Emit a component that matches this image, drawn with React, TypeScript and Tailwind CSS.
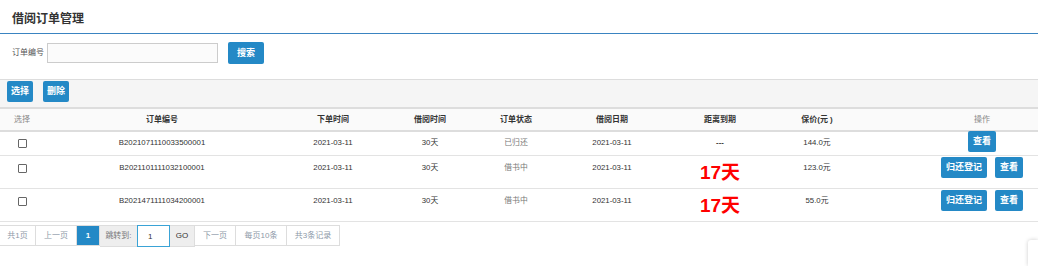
import React from 'react';

type Order = {
  no: string;
  created: string;
  days: string;
  status: string;
  date: string;
  left: string | null;
  price: string;
  canReturn: boolean;
};

const orders: Order[] = [
  { no: 'B2021071110033500001', created: '2021-03-11', days: '30天', status: '已归还', date: '2021-03-11', left: null, price: '144.0元', canReturn: false },
  { no: 'B2021101111032100001', created: '2021-03-11', days: '30天', status: '借书中', date: '2021-03-11', left: '17天', price: '123.0元', canReturn: true },
  { no: 'B2021471111034200001', created: '2021-03-11', days: '30天', status: '借书中', date: '2021-03-11', left: '17天', price: '55.0元', canReturn: true },
];

const cols = 'grid grid-cols-[44px_236px_106px_88px_84px_108px_108px_86px_1fr]';

const Btn: React.FC<{ label: string; className?: string }> = ({ label, className = '' }) => (
  <button
    className={`h-[21px] rounded-[2px] bg-[#2489c6] px-[4px] text-[9px] font-bold leading-[21px] text-white ${className}`}
  >
    {label}
  </button>
);

const PageItem: React.FC<{ children: React.ReactNode; className?: string }> = ({ children, className = '' }) => (
  <div className={`flex h-[21px] items-center justify-center border border-l-0 border-[#ddd] text-[8px] text-[#8d99a8] ${className}`}>
    {children}
  </div>
);

const App: React.FC = () => {
  return (
    <div className="relative h-[266px] w-[1038px] overflow-hidden bg-white font-['Liberation_Sans','Noto_Sans_CJK_SC',sans-serif] text-[#333]">
      <div className="flex h-[34px] items-center border-b border-[#3a84c1] pl-3 pt-[4px]">
        <h1 className="text-[12px] font-bold text-[#333]">借阅订单管理</h1>
      </div>

      <div className="pb-[15px] pl-3 pt-[8px]">
        <div className="flex h-[22px] items-center">
          <span className="w-[35px] text-[8px] text-[#555]">订单编号</span>
          <input className="h-[20px] w-[171px] border border-[#ccc] bg-[#fbfbfb] outline-none" />
          <Btn label="搜索" className="ml-[10px] h-[22px] w-[36px] leading-[22px]" />
        </div>
      </div>

      <div className="flex h-[28px] gap-[10px] border-t border-[#ddd] bg-[#f5f5f5] pl-[7px] pt-[1px]">
        <Btn label="选择" className="h-[20px] w-[26px] px-0 leading-[20px]" />
        <Btn label="删除" className="h-[20px] w-[26px] px-0 leading-[20px]" />
      </div>

      <div className="border-t-2 border-[#ddd]">
        <div className={`${cols} h-[23px] items-center border-b-2 border-[#ddd] bg-[#fafafa] text-center text-[8px]`}>
          <span className="font-normal text-[#888]">选择</span>
          <span className="font-bold">订单编号</span>
          <span className="font-bold">下单时间</span>
          <span className="font-bold">借阅时间</span>
          <span className="font-bold">订单状态</span>
          <span className="font-bold">借阅日期</span>
          <span className="font-bold">距离到期</span>
          <span className="font-bold">保价(元 )</span>
          <span className="pl-[66px] font-normal text-[#888]">操作</span>
        </div>

        {orders.map((o, i) => (
          <div
            key={o.no}
            className={`${cols} items-start border-b border-[#e3e3e3] text-center text-[7.8px] leading-[22px] ${i === 0 ? 'h-[24px]' : 'h-[33px] pt-[1px]'}`}
          >
            <div className="flex h-[22px] items-center justify-center">
              <input type="checkbox" className="h-[9px] w-[9px] appearance-none rounded-[1px] border border-[#666] bg-white" />
            </div>
            <span>{o.no}</span>
            <span>{o.created}</span>
            <span>{o.days}</span>
            <span className="text-[#777]">{o.status}</span>
            <span>{o.date}</span>
            {o.left ? (
              <span className="text-[19px] font-bold leading-[32px] text-[#ff0000]">{o.left}</span>
            ) : (
              <span className="font-bold">---</span>
            )}
            <span>{o.price}</span>
            <div className="flex justify-center gap-[8px] pl-[66px]">
              {o.canReturn && <Btn label="归还登记" className="w-[46px]" />}
              <Btn label="查看" className={`w-[28px] ${i === 0 ? '-mt-[1px]' : ''}`} />
            </div>
          </div>
        ))}
      </div>

      <div className="mt-[3px] flex">
        <PageItem className="w-[36px] border-l-0">共1页</PageItem>
        <PageItem className="w-[41px]">上一页</PageItem>
        <PageItem className="w-[23px] border-[#2489c6] bg-[#2489c6] font-bold text-white">1</PageItem>
        <div className="flex h-[22px] items-center border border-l-0 border-[#ddd] bg-[#eee] text-[8px] text-[#777]">
          <span className="w-[37px] text-center">跳转到:</span>
          <input
            defaultValue="1"
            className="h-[22px] w-[33px] border border-[#3aa3d6] bg-white pl-[10px] text-[8px] text-[#333] outline-none"
          />
          <span className="w-[24px] text-center text-[#333]">GO</span>
        </div>
        <PageItem className="w-[41px]">下一页</PageItem>
        <PageItem className="w-[51px]">每页10条</PageItem>
        <PageItem className="w-[53px]">共3条记录</PageItem>
      </div>

      <div className="absolute bottom-0 right-0 h-[26px] w-[10px] rounded-tl-[3px] bg-white shadow-[0_0_4px_rgba(0,0,0,0.2)]" />
    </div>
  );
};

export default App;
